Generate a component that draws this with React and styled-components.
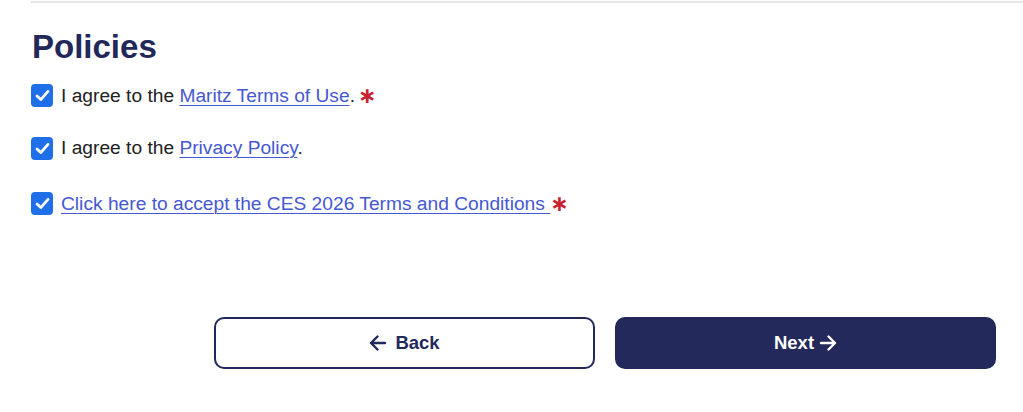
import React from "react";
import styled, { createGlobalStyle } from "styled-components";

const Global = createGlobalStyle`
  html, body { margin: 0; padding: 0; background: #ffffff; }
  body { font-family: "Liberation Sans", Arial, sans-serif; }
`;

const Page = styled.div`
  width: 1023px;
  height: 412px;
  box-sizing: border-box;
  padding: 1px 0 0 31px;
  overflow: hidden;
`;

const Divider = styled.div`
  height: 2px;
  background: #e6e6ea;
`;

const Heading = styled.h2`
  margin: 24px 0 0 1px;
  font-size: 33px;
  line-height: 40px;
  font-weight: 700;
  color: #22285a;
`;

const List = styled.div`
  display: flex;
  flex-direction: column;
  margin-top: 16px;
`;

const Row = styled.label`
  display: flex;
  align-items: center;
  gap: 8px;
  height: 24px;
  margin-top: ${(p) => p.$offset || 0}px;
  font-size: 19.2px;
  color: #222222;
`;

const Box = styled.span`
  flex: none;
  width: 22px;
  height: 23px;
  border-radius: 4px;
  background: #1f6fe8;
  display: flex;
  align-items: center;
  justify-content: center;
`;

const Link = styled.a`
  color: #4658d2;
  text-decoration: underline;
  text-underline-offset: 3px;
  text-decoration-thickness: 1px;
  cursor: pointer;
`;

const Required = styled.span`
  color: #c8202f;
  font-family: "DejaVu Sans", sans-serif;
  font-weight: 700;
  font-size: 22px;
  line-height: 1;
  margin-left: ${(p) => p.$gap || 0}px;
  position: relative;
  top: 1px;
`;

const Actions = styled.div`
  display: flex;
  justify-content: flex-end;
  gap: 20px;
  margin-top: 102px;
  padding-right: 27px;
`;

const Button = styled.button`
  width: 381px;
  height: 52px;
  box-sizing: border-box;
  border-radius: 10px;
  border: 2px solid #22285a;
  background: ${(p) => (p.$primary ? "#23295a" : "#ffffff")};
  color: ${(p) => (p.$primary ? "#ffffff" : "#22285a")};
  font-family: "Liberation Sans", Arial, sans-serif;
  font-size: 18.5px;
  font-weight: 700;
  display: flex;
  align-items: center;
  justify-content: center;
  gap: ${(p) => (p.$primary ? 5 : 8)}px;
  cursor: pointer;
  padding: 0;
`;

const Check = () => (
  <svg width="15" height="13" viewBox="0 0 15 13" fill="none">
    <path d="M2 7 L5.8 10.6 L13 2.4" stroke="#fff" strokeWidth="2.8" strokeLinecap="round" strokeLinejoin="round" />
  </svg>
);

const Arrow = ({ left }) => (
  <svg width="18" height="16" viewBox="0 0 18 16" fill="none">
    {left ? (
      <path d="M16 8 H2 M8.5 1.5 L2 8 L8.5 14.5" stroke="currentColor" strokeWidth="2.4" strokeLinecap="round" strokeLinejoin="round" />
    ) : (
      <path d="M2 8 H16 M9.5 1.5 L16 8 L9.5 14.5" stroke="currentColor" strokeWidth="2.4" strokeLinecap="round" strokeLinejoin="round" />
    )}
  </svg>
);

export default function App() {
  return (
    <>
      <Global />
      <Page>
        <Divider />
        <Heading>Policies</Heading>
        <List>
          <Row>
            <Box><Check /></Box>
            <span>
              I agree to the <Link>Maritz Terms of Use</Link>.
              <Required $gap={3}>∗</Required>
            </span>
          </Row>
          <Row $offset={29}>
            <Box><Check /></Box>
            <span>
              I agree to the <Link>Privacy Policy</Link>.
            </span>
          </Row>
          <Row $offset={31}>
            <Box><Check /></Box>
            <span>
              <Link>Click here to accept the CES 2026 Terms and Conditions&nbsp;</Link>
              <Required>∗</Required>
            </span>
          </Row>
        </List>
        <Actions>
          <Button>
            <Arrow left />
            Back
          </Button>
          <Button $primary>
            Next
            <Arrow />
          </Button>
        </Actions>
      </Page>
    </>
  );
}
